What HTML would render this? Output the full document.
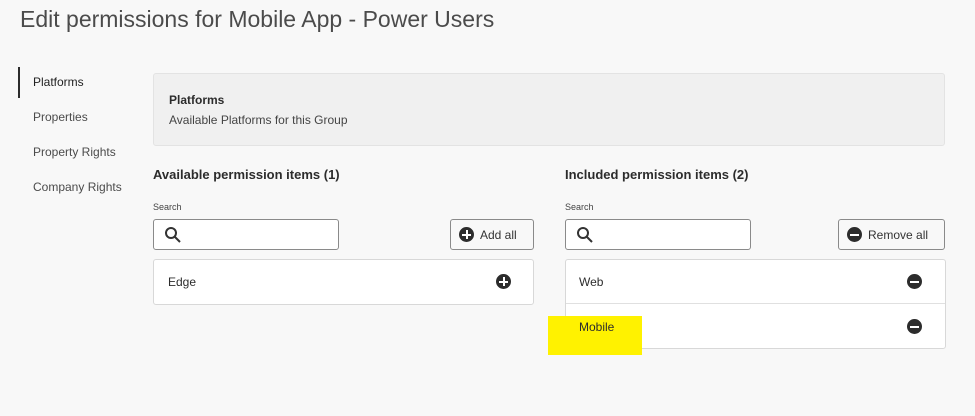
<!DOCTYPE html>
<html><head><style>
body{margin:0;width:975px;height:416px;background:#f8f8f8;font-family:"Liberation Sans",sans-serif;color:#2c2c2c;position:relative;overflow:hidden}
.a{position:absolute;white-space:nowrap}
.t{left:20px;top:6px;font-size:23px;color:#4b4b4b}
.nav{left:33px;font-size:12px;color:#4b4b4b}
.box{position:absolute;background:#fff;border:1px solid #d8d8d8;border-radius:3px;box-sizing:border-box}
.btn{position:absolute;background:#f8f8f8;border:1px solid #8a8a8a;border-radius:3px;box-sizing:border-box;font-size:12px;color:#333;display:flex;align-items:center;gap:6px;padding-left:8px}
.inp{position:absolute;background:#fff;border:1px solid #8a8a8a;border-radius:3px;box-sizing:border-box}
.ic{width:15px;height:15px;border-radius:50%;background:#2c2c2c;position:relative;display:inline-block}
.ic:before{content:"";position:absolute;left:3px;top:6.5px;width:9px;height:2px;background:#fff}
.ic.p:after{content:"";position:absolute;left:6.5px;top:3px;width:2px;height:9px;background:#fff}
.pos{position:absolute}
</style></head><body>
<div class="a t">Edit permissions for Mobile App - Power Users</div>
<div class="a" style="left:18px;top:67px;width:2px;height:31px;background:#2c2c2c"></div>
<div class="a nav" style="top:75px;color:#222">Platforms</div>
<div class="a nav" style="top:110px">Properties</div>
<div class="a nav" style="top:145px">Property Rights</div>
<div class="a nav" style="top:180px">Company Rights</div>
<div class="a" style="left:153px;top:73px;width:792px;height:73px;background:#f0f0f0;border:1px solid #e3e3e3;box-sizing:border-box;border-radius:3px"></div>
<div class="a" style="left:169px;top:93px;font-size:12px;font-weight:bold">Platforms</div>
<div class="a" style="left:169px;top:113px;font-size:12px;color:#444">Available Platforms for this Group</div>
<div class="a" style="left:153px;top:167px;font-size:13px;font-weight:bold">Available permission items (1)</div>
<div class="a" style="left:565px;top:167px;font-size:13px;font-weight:bold">Included permission items (2)</div>
<div class="a" style="left:153px;top:202px;font-size:9px;color:#444">Search</div>
<div class="a" style="left:565px;top:202px;font-size:9px;color:#444">Search</div>
<div class="inp" style="left:153px;top:219px;width:186px;height:31px"><svg width="20" height="20" style="position:absolute;left:9px;top:5px"><circle cx="8" cy="8" r="5" fill="none" stroke="#333" stroke-width="2"/><path d="M12 12l5 5" stroke="#333" stroke-width="2"/></svg></div>
<div class="inp" style="left:565px;top:219px;width:186px;height:31px"><svg width="20" height="20" style="position:absolute;left:9px;top:5px"><circle cx="8" cy="8" r="5" fill="none" stroke="#333" stroke-width="2"/><path d="M12 12l5 5" stroke="#333" stroke-width="2"/></svg></div>
<div class="btn" style="left:450px;top:219px;width:84px;height:31px"><span class="ic p"></span>Add all</div>
<div class="btn" style="left:838px;top:219px;width:107px;height:31px"><span class="ic"></span>Remove all</div>
<div class="box" style="left:153px;top:259px;width:381px;height:46px"></div>
<div class="a" style="left:168px;top:275px;font-size:12px">Edge</div>
<div class="pos" style="left:496px;top:274px"><span class="ic p"></span></div>
<div class="box" style="left:565px;top:259px;width:381px;height:90px"></div>
<div class="a" style="left:566px;top:303px;width:379px;height:1px;background:#e0e0e0"></div>
<div class="a" style="left:579px;top:275px;font-size:12px">Web</div>
<div class="pos" style="left:907px;top:274px"><span class="ic"></span></div>
<div class="a" style="left:548px;top:316px;width:94px;height:39px;background:#fff200"></div>
<div class="a" style="left:579px;top:320px;font-size:12px">Mobile</div>
<div class="pos" style="left:907px;top:319px"><span class="ic"></span></div>
</body></html>
